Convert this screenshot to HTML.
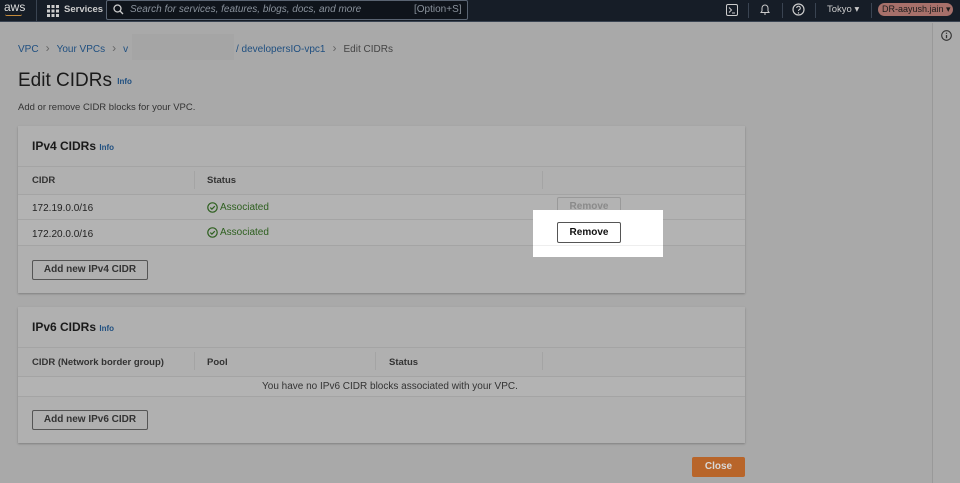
<!DOCTYPE html>
<html><head><meta charset="utf-8"><style>
*{margin:0;padding:0;box-sizing:border-box}
body{width:960px;height:483px;overflow:hidden;background:#a9a9a9;font-family:"Liberation Sans",sans-serif;position:relative;color:#1a1a1a}
.a{position:absolute;white-space:nowrap}
.hdr{left:0;top:0;width:960px;height:22px;background:#161d27;border-bottom:1px solid #3a4452}
.card{background:#b0b0b0;box-shadow:0 1px 2px rgba(0,0,0,.25)}
.line{height:1px;background:#a4a4a4}
.vl{width:1px;background:#a4a4a4}
.btn{border:1px solid #555;border-radius:2px;font-size:10px;font-weight:bold;color:#333;text-align:center;line-height:18px}
.lnk{color:#1f4f80}
.info{font-size:8px;font-weight:bold;color:#1f4f80}
.th{font-size:9.5px;font-weight:bold;color:#333}
.ok{font-size:10px;color:#2d5f1e}
.chev{color:#666;margin:0 7px;font-size:12px}
</style></head><body>
<div class="a hdr"></div>
<div class="a" style="left:4px;top:0px;color:#ddd;font-size:12px">aws</div>
<div class="a" style="left:5px;top:14px;width:17px;height:2px;border-bottom:1.5px solid #c48a3a;border-radius:0 0 8px 8px"></div>
<div class="a" style="left:36px;top:0;width:1px;height:22px;background:#3a4452"></div>
<svg class="a" style="left:47px;top:5px" width="12" height="12"><g fill="#ccc"><rect x="0" y="0" width="3" height="3"/><rect x="4.5" y="0" width="3" height="3"/><rect x="9" y="0" width="3" height="3"/><rect x="0" y="4.5" width="3" height="3"/><rect x="4.5" y="4.5" width="3" height="3"/><rect x="9" y="4.5" width="3" height="3"/><rect x="0" y="9" width="3" height="3"/><rect x="4.5" y="9" width="3" height="3"/><rect x="9" y="9" width="3" height="3"/></g></svg>
<div class="a" style="left:64px;top:4px;color:#ccc;font-size:9.5px;font-weight:bold">Services</div>
<div class="a" style="left:106px;top:0;width:362px;height:20px;border:1px solid #5a6472;border-radius:2px;background:#0f141b"></div>
<svg class="a" style="left:113px;top:4px" width="11" height="11"><circle cx="4.5" cy="4.5" r="3.5" stroke="#ccc" stroke-width="1.3" fill="none"/><path d="M7 7l3 3" stroke="#ccc" stroke-width="1.3"/></svg>
<div class="a" style="left:130px;top:4px;color:#8a929c;font-size:10px;font-style:italic">Search for services, features, blogs, docs, and more</div>
<div class="a" style="left:414px;top:4px;color:#8a929c;font-size:10px">[Option+S]</div>
<svg class="a" style="left:726px;top:4px" width="12" height="12"><rect x=".5" y=".5" width="11" height="11" rx="1.5" stroke="#ccc" fill="none"/><path d="M3 3.5l2.5 2.5L3 8.5M6 9h3" stroke="#ccc" fill="none"/></svg>
<div class="a" style="left:748px;top:3px;width:1px;height:15px;background:#3a4452"></div>
<svg class="a" style="left:759px;top:3px" width="12" height="13"><path d="M2 9.5h8L9 8V5a3 3 0 0 0-6 0v3z M5 11h2" stroke="#ccc" fill="none"/></svg>
<div class="a" style="left:782px;top:3px;width:1px;height:15px;background:#3a4452"></div>
<svg class="a" style="left:792px;top:3px" width="13" height="13"><circle cx="6.5" cy="6.5" r="5.5" stroke="#ccc" fill="none" stroke-width="1.2"/><path d="M4.7 5a1.8 1.8 0 1 1 2.5 1.7c-.6.3-.7.7-.7 1.3" stroke="#ccc" fill="none"/><circle cx="6.5" cy="10" r=".7" fill="#ccc"/></svg>
<div class="a" style="left:815px;top:3px;width:1px;height:15px;background:#3a4452"></div>
<div class="a" style="left:827px;top:4px;color:#ccc;font-size:9.5px">Tokyo ▾</div>
<div class="a" style="left:871px;top:3px;width:1px;height:15px;background:#3a4452"></div>
<div class="a" style="left:878px;top:3px;width:75px;height:13px;border-radius:7px;background:#a7706a;color:#1d1d1d;font-size:9px;line-height:13px;padding-left:4px">DR-aayush.jain ▾</div>

<div class="a" style="left:932px;top:23px;width:28px;height:460px;background:#ababab;border-left:1px solid #999"></div>
<svg class="a" style="left:941px;top:30px" width="11" height="11"><circle cx="5.5" cy="5.5" r="4.8" stroke="#333" fill="none" stroke-width="1.1"/><path d="M5.5 5v3.2" stroke="#333" stroke-width="1.3"/><circle cx="5.5" cy="3.3" r=".7" fill="#333"/></svg>

<div class="a" style="left:18px;top:41px;font-size:10px"><span class="lnk">VPC</span><span class="chev">›</span><span class="lnk">Your VPCs</span><span class="chev">›</span><span class="lnk">v</span></div>
<div class="a" style="left:132px;top:34px;width:102px;height:26px;background:#a5a5a5"></div>
<div class="a" style="left:236px;top:41px;font-size:10px"><span class="lnk">/ developersIO-vpc1</span><span class="chev">›</span><span style="color:#444">Edit CIDRs</span></div>
<div class="a" style="left:18px;top:70px;font-size:19px;color:#1a1a1a">Edit CIDRs <span class="info" style="font-size:8px;vertical-align:2px">Info</span></div>
<div class="a" style="left:18px;top:102px;font-size:9.5px;color:#333">Add or remove CIDR blocks for your VPC.</div>

<div class="a card" style="left:18px;top:126px;width:727px;height:167px"></div>
<div class="a" style="left:32px;top:139px;font-size:12px;font-weight:bold">IPv4 CIDRs <span class="info">Info</span></div>
<div class="a line" style="left:18px;top:166px;width:727px"></div>
<div class="a th" style="left:32px;top:175px">CIDR</div>
<div class="a th" style="left:207px;top:175px">Status</div>
<div class="a vl" style="left:194px;top:171px;height:18px"></div>
<div class="a vl" style="left:542px;top:171px;height:18px"></div>
<div class="a line" style="left:18px;top:194px;width:727px"></div>
<div class="a" style="left:18px;top:195px;width:727px;height:50px;background:#b3b3b3"></div>
<div class="a line" style="left:18px;top:219px;width:727px"></div>
<div class="a line" style="left:18px;top:245px;width:727px"></div>
<div class="a" style="left:32px;top:203px;font-size:10px;color:#222">172.19.0.0/16</div>
<div class="a" style="left:32px;top:229px;font-size:10px;color:#222">172.20.0.0/16</div>
<svg class="a" style="left:207px;top:202px" width="11" height="11"><circle cx="5.5" cy="5.5" r="4.7" stroke="#2d5f1e" fill="none" stroke-width="1.2"/><path d="M3.3 5.6l1.6 1.6 2.9-3" stroke="#2d5f1e" fill="none" stroke-width="1.2"/></svg>
<div class="a ok" style="left:220px;top:202px">Associated</div>
<svg class="a" style="left:207px;top:227px" width="11" height="11"><circle cx="5.5" cy="5.5" r="4.7" stroke="#2d5f1e" fill="none" stroke-width="1.2"/><path d="M3.3 5.6l1.6 1.6 2.9-3" stroke="#2d5f1e" fill="none" stroke-width="1.2"/></svg>
<div class="a ok" style="left:220px;top:227px">Associated</div>
<div class="a btn" style="left:557px;top:197px;width:64px;height:20px;border-color:#999;color:#8a8a8a">Remove</div>
<div class="a" style="left:533px;top:210px;width:130px;height:47px;background:#fff"></div>
<div class="a" style="left:533px;top:245px;width:130px;height:1px;background:#eee"></div>
<div class="a btn" style="left:557px;top:222px;width:64px;height:21px;background:#fff;color:#111;line-height:19px">Remove</div>
<div class="a btn" style="left:32px;top:260px;width:116px;height:20px">Add new IPv4 CIDR</div>

<div class="a card" style="left:18px;top:307px;width:727px;height:136px"></div>
<div class="a" style="left:32px;top:320px;font-size:12px;font-weight:bold">IPv6 CIDRs <span class="info">Info</span></div>
<div class="a line" style="left:18px;top:347px;width:727px"></div>
<div class="a th" style="left:32px;top:357px">CIDR (Network border group)</div>
<div class="a th" style="left:207px;top:357px">Pool</div>
<div class="a th" style="left:389px;top:357px">Status</div>
<div class="a vl" style="left:194px;top:352px;height:18px"></div>
<div class="a vl" style="left:375px;top:352px;height:18px"></div>
<div class="a vl" style="left:542px;top:352px;height:18px"></div>
<div class="a" style="left:18px;top:376px;width:727px;height:21px;background:#b3b3b3;border-top:1px solid #a4a4a4;border-bottom:1px solid #a4a4a4"></div>
<div class="a" style="left:262px;top:381px;font-size:10px;color:#333">You have no IPv6 CIDR blocks associated with your VPC.</div>
<div class="a btn" style="left:32px;top:410px;width:116px;height:20px">Add new IPv6 CIDR</div>

<div class="a" style="left:692px;top:457px;width:53px;height:20px;background:#b8652a;border-radius:2px;color:#d8d8d8;font-size:10px;font-weight:bold;text-align:center;line-height:20px">Close</div>
</body></html>
